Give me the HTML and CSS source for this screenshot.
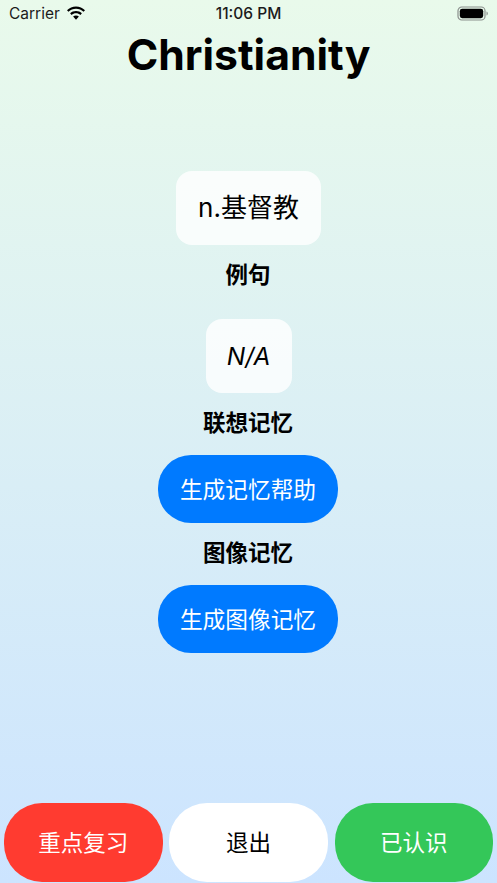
FILE: index.html
```html
<!DOCTYPE html>
<html lang="zh-CN">
<head>
	<meta charset="UTF-8">
	<title>Christianity</title>
	<link rel="stylesheet" href="styles.css">
</head>
<body>
	<div class="statusBar">
		<div class="statusLeft">
			<span>Carrier</span>
			<svg class="wifi" width="20" height="15" viewBox="0 0 20 15">
				<path d="M10 2.800c2.900 0 5.500 1.100 7.500 3l1.500-1.600C16.600 1.900 13.500.500 10 .500S3.400 1.900 1 4.200l1.500 1.600c2-1.900 4.600-3 7.500-3z"/>
				<path d="M10 7.200c1.700 0 3.200.6 4.400 1.700l1.500-1.600C14.300 5.800 12.300 5 10 5s-4.300.8-5.900 2.300l1.500 1.600C6.800 7.800 8.300 7.200 10 7.200z"/>
				<path d="M10 9.500c-1.100 0-2.100.4-2.900 1.100l2.900 3.100 2.900-3.100c-.8-.7-1.800-1.100-2.900-1.100z"/>
			</svg>
		</div>
		<div class="statusTime">11:06 PM</div>
		<div class="statusRight">
			<svg class="battery" width="31" height="15" viewBox="0 0 31 15">
				<rect x="1" y="1" width="27" height="13" rx="3.800" fill="none" stroke="#8a8f8c" stroke-width="1.200"/>
				<rect x="2.800" y="2.800" width="23.400" height="9.400" rx="2.400" fill="#000"/>
				<path d="M29.500 5.500c.8.300 1.300 1 1.300 2s-.5 1.700-1.300 2z" fill="#8a8f8c"/>
			</svg>
		</div>
	</div>

	<h1 class="word">Christianity</h1>

	<div class="content">
		<div class="card meaning">n.基督教</div>
		<div class="label labelExample">例句</div>
		<div class="card example">N/A</div>
		<div class="label labelMemory">联想记忆</div>
		<button class="pill" type="button">生成记忆帮助</button>
		<div class="label labelMemory">图像记忆</div>
		<button class="pill" type="button">生成图像记忆</button>
	</div>

	<div class="actions">
		<button class="action red" type="button">重点复习</button>
		<button class="action white" type="button">退出</button>
		<button class="action green" type="button">已认识</button>
	</div>
</body>
</html>
```

FILE: styles.css
```css
*{
	box-sizing: border-box;
}
html, body{
	margin: 0;
	height: 100%;
}
body{
	width: 497px;
	height: 883px;
	overflow: hidden;
	display: flex;
	flex-direction: column;
	background: linear-gradient(180deg, #e9faeb 0%, #cce4ff 100%);
	color: #000;
	font-family: Inter, "Noto Sans CJK SC", sans-serif;
}
button{
	border: none;
	font-family: inherit;
	padding: 0;
}
.statusBar{
	height: 28px;
	padding: 0 9px 2px 9px;
	display: grid;
	grid-template-columns: 1fr auto 1fr;
	align-items: center;
	font-size: 15.500px;
	color: #1b1b1b;
}
.statusLeft{
	display: flex;
	align-items: center;
	gap: 6px;
}
.statusTime{
	font-weight: 500;
}
.statusRight{
	display: flex;
	justify-content: flex-end;
}
.word{
	margin: 0;
	height: 54px;
	line-height: 54px;
	text-align: center;
	font-size: 42.700px;
	font-weight: 700;
}
.content{
	flex: 1;
	padding-top: 89px;
	display: flex;
	flex-direction: column;
	align-items: center;
}
.card{
	height: 74px;
	display: flex;
	align-items: center;
	justify-content: center;
	border-radius: 16px;
	background: rgba(255, 255, 255, 0.8);
	font-size: 26px;
}
.meaning{
	width: 145px;
	padding-bottom: 5px;
}
.example{
	width: 86px;
	font-size: 24.500px;
	font-style: italic;
}
.label{
	height: 32px;
	line-height: 32px;
	font-size: 22.500px;
	font-weight: 700;
	text-align: center;
}
.labelExample{
	margin-top: 14px;
	margin-bottom: 28px;
	margin-right: 1px;
}
.labelMemory{
	margin-top: 14px;
	margin-bottom: 16px;
	margin-right: 1px;
}
.pill{
	width: 180px;
	height: 68px;
	margin-right: 1px;
	padding-bottom: 2px;
	border-radius: 33px;
	background: #007aff;
	color: #fff;
	font-size: 22.700px;
}
.actions{
	height: 80px;
	padding: 0 4px 1px;
	display: flex;
	justify-content: space-between;
}
.action{
	width: 158.500px;
	height: 79px;
	padding-bottom: 4px;
	border-radius: 38px;
	font-size: 22.500px;
}
.red{
	background: #ff3b30;
	color: #fff;
}
.white{
	background: #fff;
	color: #000;
}
.green{
	background: #34c759;
	color: #fff;
}
```
